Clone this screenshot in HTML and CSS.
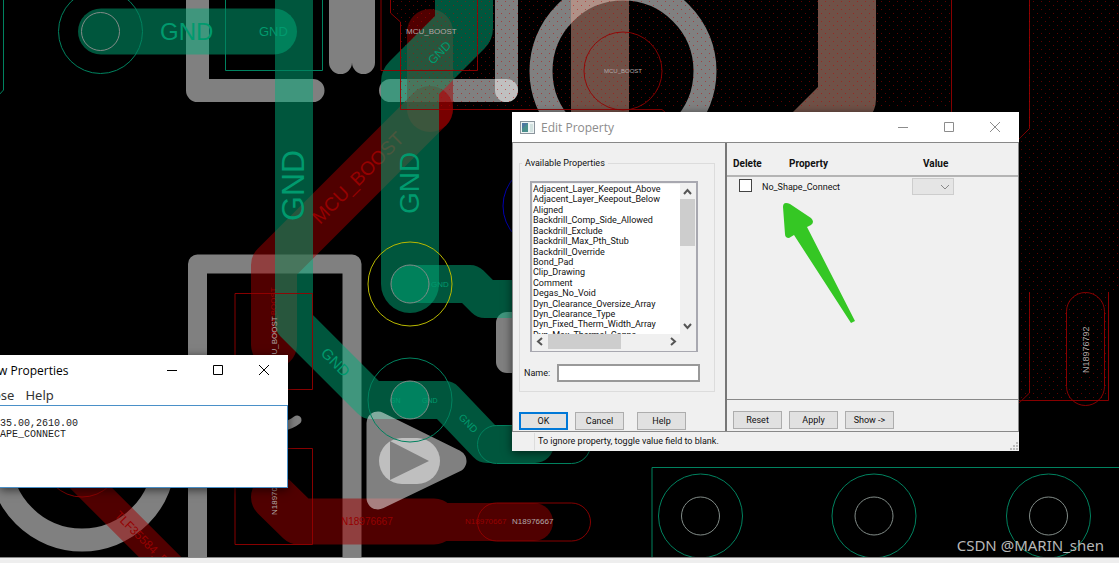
FILE: index.html
```html
<!DOCTYPE html>
<html lang="en">
<head>
<meta charset="utf-8">
<title>Edit Property</title>
<link rel="stylesheet" href="styles.css">
</head>
<body>
<main class="board">
  <svg class="art" viewBox="0 0 1119 558" preserveAspectRatio="xMinYMin slice" aria-label="PCB layout">
    <defs>
      <pattern id="dots" width="8" height="8" patternUnits="userSpaceOnUse">
        <rect x="1" y="1" width="1" height="1"/><rect x="5" y="5" width="1" height="1"/>
      </pattern>
    </defs>
    <rect width="1119" height="558" fill="#000"/>

    <!-- silkscreen -->
    <g class="silk">
      <path d="M197.500 -20V90.500H313"/>
      <path d="M340.500 -20V62.500M363.500 -20V62.500"/>
      <path d="M390.500 90.500H506.500"/>
      <path d="M506.500 -20V90.500"/>
      <circle cx="623" cy="71" r="82"/>
      <circle cx="82" cy="458" r="82"/>
      <path class="silk-thin" d="M197.500 580V264H352V580"/>
      <path class="silk-cap" d="M280 427Q291 425 297 420"/>
    </g>
    <rect x="496" y="312" width="50" height="61" rx="11" fill="#808080"/>

    <!-- bottom copper: red -->
    <path class="red w46" d="M430 32V109"/>
    <path class="red w46" d="M430 109L274 265V345"/>
    <g class="redgroup">
      <path class="w46" d="M274 497L299 521.500H434"/>
      <path class="w38" d="M434 522H534"/>
    </g>
    <path class="red w30" d="M60 457L180 577"/>
    <g class="t-red">
      <text transform="translate(320 225) rotate(-45)" font-size="19">MCU_BOOST</text>
      <text x="341" y="525" font-size="10">N18976667</text>
      <text x="465" y="524" font-size="8">N18970667</text>
      <text transform="translate(114 516) rotate(45)" font-size="12">TLF35584_EN</text>
      <text transform="translate(276 338) rotate(-90)" font-size="8">MCU_BOOST</text>
    </g>

    <!-- top copper: green -->
    <path class="green w46" d="M101 31.500H274"/>
    <path class="green w38" d="M294 -20V323L371 400H445L487 444H535"/>
    <path class="green w58" d="M410 284V82L464 28V-40"/>
    <path class="green w38" d="M410 284H470L485 299H560"/>
    <circle class="pad" cx="410" cy="400" r="19"/>
    <g class="t-green">
      <text x="160" y="40" font-size="24">GND</text>
      <text x="259" y="36" font-size="13">GND</text>
      <text transform="translate(304 221) rotate(-90)" font-size="32">GND</text>
      <text transform="translate(419 214) rotate(-90)" font-size="28">GND</text>
      <text transform="translate(433 65) rotate(-45)" font-size="12">GND</text>
      <text transform="translate(320 354) rotate(45)" font-size="15">GND</text>
      <text transform="translate(458 418) rotate(45)" font-size="10">GND</text>
      <text x="431" y="287" font-size="8">GND</text>
      <text x="390" y="403" font-size="7">GN</text>
      <text x="422" y="403" font-size="7">GND</text>
    </g>

    <!-- power copper -->
    <path class="brown" d="M600 -40V170M847 -40V99L780 166"/>

    <!-- polarity marker -->
    <path d="M378 423V498L455 461Z" class="marker"/>
    <rect x="379" y="438" width="61" height="46" rx="23" fill="#bfbfbf"/>
    <path d="M390 441V480L429 461Z" fill="#808080"/>

    <!-- outlines -->
    <g class="line-red">
      <path d="M381 -5V70.500H477.500V-5M390.500 -5V13L400.500 22V109.500H662L680 125"/>
      <circle cx="623" cy="71" r="39"/>
      <circle cx="82" cy="458" r="39"/>
      <path d="M235 293.500H312.500V389.500H235ZM235 448.500H312.500V544.500H235Z"/>
      <path d="M951.500 -5V120M1029.500 -5V128.500L1018 140M1029.500 292V393L1018 404M1018 400.500H1108.500V292"/>
      <rect x="1066.500" y="292.500" width="38" height="113" rx="19"/>
      <rect x="477.500" y="503" width="113" height="38" rx="19"/>
    </g>
    <g class="line-green">
      <path d="M3.500 -5V90L-2 96M225.500 -5V70.500H322.500V-5M652 563V467.500H1125"/>
      <circle cx="100.500" cy="31.500" r="42"/>
      <circle cx="410" cy="400" r="42"/>
      <rect x="477.500" y="425.500" width="113" height="38" rx="19"/>
      <circle cx="700.500" cy="516" r="42"/>
      <circle cx="874" cy="516" r="42"/>
      <circle cx="1048.500" cy="516" r="42"/>
    </g>
    <g class="line-gray">
      <circle cx="100.500" cy="31.500" r="19"/>
      <circle cx="410" cy="284" r="19"/>
      <circle cx="410" cy="400" r="19"/>
      <circle cx="700.500" cy="516" r="19"/>
      <circle cx="874" cy="516" r="19"/>
      <circle cx="1048.500" cy="516" r="19"/>
    </g>
    <circle cx="410" cy="284" r="42" fill="none" stroke="#b8b800"/>
    <circle cx="545" cy="206" r="42" fill="none" stroke="#0000b4"/>
    <path d="M390 0V13L400 22V109H951V0ZM1029 0V128L1018 140V400H1108V292H1119V0Z" fill="url(#dots)"/>
    <g class="t-gray">
      <text x="406" y="34" font-size="8">MCU_BOOST</text>
      <text x="604" y="73" font-size="6">MCU_BOOST</text>
      <text x="512" y="524" font-size="8">N18976667</text>
      <text transform="translate(277 367) rotate(-90)" font-size="8">MCU_BOOST</text>
      <text transform="translate(277 515) rotate(-90)" font-size="8">N18970667</text>
      <text transform="translate(1089 373) rotate(-90)" font-size="9">N18976792</text>
    </g>
  </svg>

  <section class="window viewer" aria-label="Show Properties">
    <header class="titlebar">
      <span class="title">w Properties</span>
      <button class="cap" aria-label="Minimize"><svg viewBox="0 0 12 12"><path d="M1 6.500H11"/></svg></button>
      <button class="cap" aria-label="Maximize"><svg viewBox="0 0 12 12"><path d="M1.500 1.500H10.500V10.500H1.500Z"/></svg></button>
      <button class="cap" aria-label="Close"><svg viewBox="0 0 12 12"><path d="M1 1L11 11M11 1L1 11"/></svg></button>
    </header>
    <nav class="menu"><button>ose</button><button>Help</button></nav>
    <pre class="report">35.00,2610.00
APE_CONNECT</pre>
  </section>

  <section class="window dialog" aria-label="Edit Property">
    <header class="titlebar">
      <svg class="app" viewBox="0 0 15 13"><rect x=".5" y=".5" width="14" height="12" fill="#eef4f4" stroke="#8a949c"/><rect x="2" y="2" width="6" height="9" fill="#4a8f8c"/><path d="M2 2H8L2 8Z" fill="#4d78a0"/><path d="M10 3H13V11H10Z" fill="#d2e2e0"/></svg>
      <span class="title">Edit Property</span>
      <button class="cap" aria-label="Minimize"><svg viewBox="0 0 12 12"><path d="M1 6.500H11"/></svg></button>
      <button class="cap" aria-label="Maximize"><svg viewBox="0 0 12 12"><path d="M1.500 1.500H10.500V10.500H1.500Z"/></svg></button>
      <button class="cap" aria-label="Close"><svg viewBox="0 0 12 12"><path d="M1 1L11 11M11 1L1 11"/></svg></button>
    </header>
    <div class="panes">
      <div class="pane left">
        <fieldset class="group">
          <legend>Available Properties</legend>
          <div class="listbox">
            <div class="view">
              <ul role="listbox" aria-label="Available Properties">
                <li role="option">Adjacent_Layer_Keepout_Above</li>
                <li role="option">Adjacent_Layer_Keepout_Below</li>
                <li role="option">Aligned</li>
                <li role="option">Backdrill_Comp_Side_Allowed</li>
                <li role="option">Backdrill_Exclude</li>
                <li role="option">Backdrill_Max_Pth_Stub</li>
                <li role="option">Backdrill_Override</li>
                <li role="option">Bond_Pad</li>
                <li role="option">Clip_Drawing</li>
                <li role="option">Comment</li>
                <li role="option">Degas_No_Void</li>
                <li role="option">Dyn_Clearance_Oversize_Array</li>
                <li role="option">Dyn_Clearance_Type</li>
                <li role="option">Dyn_Fixed_Therm_Width_Array</li>
                <li role="option">Dyn_Max_Thermal_Conns</li>
              </ul>
            </div>
            <div class="vbar">
              <svg viewBox="0 0 15 15"><path d="M4 10L7.500 6L11 10"/></svg>
              <i></i>
              <svg viewBox="0 0 15 15"><path d="M4 5L7.500 9L11 5"/></svg>
            </div>
            <div class="hbar">
              <svg viewBox="0 0 15 15"><path d="M9 4L5 7.500L9 11"/></svg>
              <i></i>
              <svg viewBox="0 0 15 15"><path d="M6 4L10 7.500L6 11"/></svg>
            </div>
          </div>
          <div class="name"><label for="name">Name:</label><input id="name" type="text"></div>
        </fieldset>
        <div class="buttons"><button class="btn primary">OK</button><button class="btn">Cancel</button><button class="btn far">Help</button></div>
      </div>
      <div class="pane right">
        <div class="sheet">
          <table>
            <thead><tr><th class="c1">Delete</th><th class="c2">Property</th><th class="c3">Value</th></tr></thead>
            <tbody><tr>
              <td class="tick"><input type="checkbox" id="del"></td>
              <td class="prop"><label for="del">No_Shape_Connect</label></td>
              <td class="val"><span class="drop"><select disabled aria-label="Value"><option></option></select><svg viewBox="0 0 10 6"><path d="M1 1L5 5L9 1"/></svg></span></td>
            </tr></tbody>
          </table>
        </div>
        <div class="buttons"><button class="btn">Reset</button><button class="btn">Apply</button><button class="btn">Show -&gt;</button></div>
      </div>
    </div>
    <footer class="status"><span>To ignore property, toggle value field to blank.</span>
      <svg viewBox="0 0 10 10"><path d="M7 1h2v2H7zM4 4h2v2H4zM7 4h2v2H7zM1 7h2v2H1zM4 7h2v2H4zM7 7h2v2H7z"/></svg>
    </footer>
  </section>

  <svg class="arrow" viewBox="0 0 74 122"><path d="M1 5Q1 1 4 1Q6 1 8 2L29 16Q33 20 29 23L25 25L73 119L69 121L12 33L7 36Q3 36 3 32Z"/></svg>
  <div class="mark">CSDN @MARIN_shen</div>
</main>
<div class="edge"></div>
</body>
</html>
```
FILE: styles.css
```css
* { box-sizing: border-box; }
body {
  margin: 0;
  height: 100vh;
  display: flex;
  flex-direction: column;
  overflow: hidden;
  background: #000;
  font-family: "Liberation Sans", Arial, sans-serif;
}
button, input, select { font: inherit; color: inherit; margin: 0; }
.board { position: relative; flex: 1; overflow: hidden; }
.edge { height: 6px; background: #eee; border-top: 1px solid #888; }

/* board drawing */
.art { display: block; width: 100%; height: 100%; }
.art text { font-family: "Liberation Sans", Arial, sans-serif; }
.silk > * { fill: none; stroke: #fff; stroke-opacity: .5; stroke-width: 23; stroke-linejoin: round; stroke-linecap: round; }
.silk .silk-thin { stroke-width: 19; }
.silk .silk-cap { stroke-width: 9; }
.red, .green, .redgroup path, .brown { fill: none; stroke-linejoin: round; stroke-linecap: round; }
.red { stroke: #a00000; stroke-opacity: .5; }
.redgroup { opacity: .5; }
.redgroup path { stroke: #a00000; }
.green { stroke: #00ac7a; stroke-opacity: .5; }
.brown { stroke: #e0a28e; stroke-opacity: .5; stroke-width: 58; }
.w30 { stroke-width: 30; }
.w38 { stroke-width: 38; }
.w46 { stroke-width: 46; }
.w58 { stroke-width: 58; }
.pad { fill: #00825f; }
.marker { fill: #fff; stroke: #fff; stroke-width: 23; stroke-linejoin: round; opacity: .5; }
.t-red { fill: #960000; }
.t-green { fill: #009a6e; }
.t-gray { fill: #b0a8a8; }
.line-red, .line-green, .line-gray { fill: none; }
.line-red { stroke: #960000; stroke-opacity: .9; }
.line-green { stroke: #00825f; }
.line-gray { stroke: #828c88; }
#dots rect { fill: #c00000; fill-opacity: .5; }

/* windows */
.window { position: absolute; display: flex; flex-direction: column; box-shadow: 0 2px 9px rgba(0, 0, 0, .6); }
.titlebar { display: flex; align-items: center; height: 30px; background: #fff; font-family: "Open Sans", sans-serif; font-size: 12px; }
.title { flex: 1; white-space: nowrap; }
.cap { width: 46px; height: 30px; padding: 0; border: 0; background: none; display: grid; place-items: center; }
.cap svg { width: 12px; height: 12px; fill: none; stroke: currentColor; }
.viewer { left: 0; top: 355px; width: 288px; background: #fff; color: #000; }
.viewer .title { margin-left: -2px; }
.viewer .titlebar { padding-right: 1px; }
.menu { display: flex; gap: 11px; height: 20px; margin-left: -7px; align-items: center; font-family: "Noto Sans", sans-serif; font-size: 13px; }
.menu button { padding: 0; border: 0; background: none; color: #333; }
.report {
  margin: 0;
  height: 83px;
  padding: 12px 0 0;
  border: 1px solid #4a90c8;
  border-left: 0;
  font: 10px/11px "Liberation Mono", monospace;
  color: #222;
}

.dialog { left: 512px; top: 112px; width: 507px; background: #f0f0f0; color: #111; font-family: Roboto, "Liberation Sans", sans-serif; font-size: 9px; }
.dialog .titlebar { padding: 0 1px 0 8px; gap: 6px; }
.dialog .titlebar .cap + .cap { margin-left: -6px; }
.dialog .title, .dialog .cap { color: #8c8c8c; }
.app { width: 15px; height: 13px; }
.panes { display: flex; height: 290px; border: 1px solid #888; }
.left { width: 214px; border-right: 2px solid #777; padding: 14px 10px 0 6px; }
.right { flex: 1; display: flex; flex-direction: column; }
.group { margin: 0; padding: 0; border: 1px solid #dcdcdc; height: 235px; }
.group legend { margin-left: 2px; padding: 0 3px; line-height: 12px; }
.listbox {
  display: grid;
  grid-template: 150px 15px / 1fr 15px;
  width: 168px;
  height: 171px;
  margin: 12px 0 0 10px;
  padding: 1px;
  border: 2px solid #a8a8b0;
  border-bottom-width: 1px;
  background: #f0f0f0;
}
.view { overflow: hidden; background: #fff; }
.view ul { margin: 0; padding: 0; list-style: none; height: 156px; display: flex; flex-direction: column; justify-content: space-between; line-height: 10px; white-space: nowrap; }
.vbar, .hbar { display: flex; background: #f0f0f0; }
.vbar { flex-direction: column; }
.vbar svg, .hbar svg { width: 15px; height: 15px; fill: none; stroke: #555; stroke-width: 2; }
.vbar i { height: 47px; background: #cdcdcd; margin-bottom: auto; }
.hbar i { width: 73px; background: #cdcdcd; margin-right: auto; }
.name { display: flex; align-items: center; margin: 12px 14px 0 4px; justify-content: space-between; }
.name input { width: 143px; height: 18px; padding: 0 3px; background: #fff; border: 2px solid #999; }
.buttons { display: flex; gap: 7px; }
.left .buttons { margin-top: 20px; }
.btn { width: 49px; height: 18px; padding: 0; border: 1px solid #adadad; background: #e1e1e1; }
.btn.primary { border: 2px solid #0078d7; }
.btn.far { margin-left: 6px; }
.sheet { height: 257px; border-bottom: 1px solid #888; }
.right .buttons { padding: 11px 6px 0; }
table { width: 100%; border-collapse: collapse; table-layout: fixed; }
th { height: 33px; padding: 8px 0 0 6px; text-align: left; font-size: 10px; border-bottom: 2px solid #b4b4b4; }
th.c1 { width: 35px; }
th.c2 { width: 150px; padding-left: 27px; }
th.c3 { padding-left: 11px; }
td { padding: 1px 0 0; height: 21px; vertical-align: top; }
.tick { padding-top: 2px; }
.prop { padding-top: 5px; }
.tick input { display: block; appearance: none; width: 13px; height: 13px; margin-left: 12px; border: 1px solid #444; background: #fff; }
.drop { position: relative; display: block; width: 42px; }
.drop select { display: block; appearance: none; width: 42px; height: 17px; border: 1px solid #bfbfbf; background: #e1e1e1; }
.drop svg { position: absolute; right: 4px; top: 6px; width: 10px; height: 6px; fill: none; stroke: #888; }
.status { display: flex; align-items: center; height: 19px; padding-left: 22px; }
.status span { flex: 1; padding-left: 3px; border-left: 1px solid #dcdcdc; line-height: 17px; }
.status svg { width: 10px; height: 10px; fill: #bbb; align-self: flex-end; }

/* annotation and credit */
.arrow { position: absolute; left: 782px; top: 202px; width: 74px; height: 122px; fill: #35c724; }
.mark { position: absolute; right: 15px; bottom: 1px; color: #b8b8b8; font: 15px/22px "Noto Sans", sans-serif; }
```
